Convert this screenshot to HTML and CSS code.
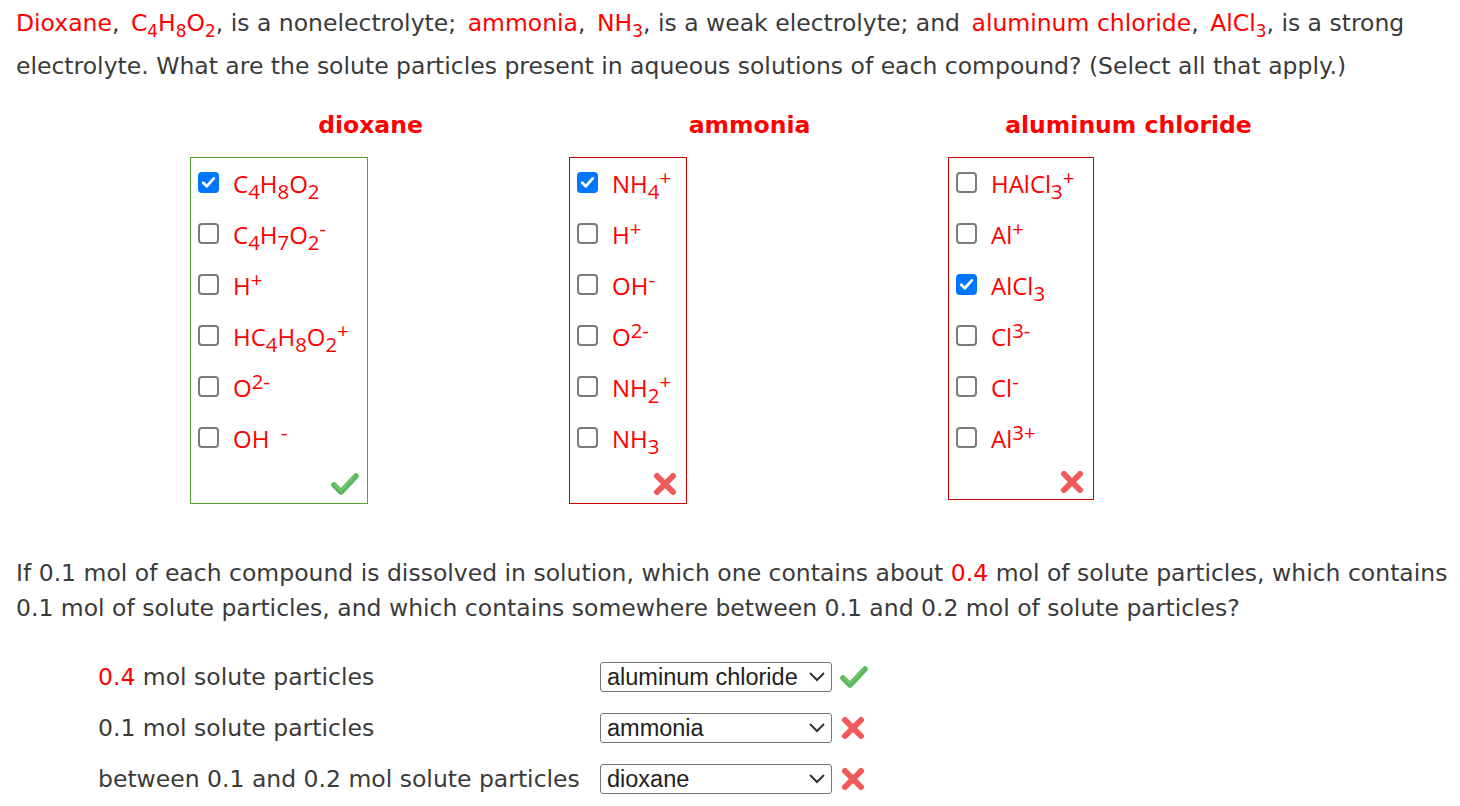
FILE: index.html
```html
<!DOCTYPE html>
<html>
<head>
<meta charset="utf-8">
<link rel="stylesheet" href="styles.css">
</head>
<body>
<p class="intro"><span class="red">Dioxane</span>, <span class="red chem">C<sub>4</sub>H<sub>8</sub>O<sub>2</sub></span>, is a nonelectrolyte; <span class="red chem">ammonia</span>, <span class="red chem">NH<sub>3</sub></span>, is a weak electrolyte; and <span class="red chem">aluminum chloride</span>, <span class="red chem">AlCl<sub>3</sub></span>, is a strong electrolyte. What are the solute particles present in aqueous solutions of each compound? (Select all that apply.)</p>

<div class="columns">
  <div class="col">
    <h3 class="col-title">dioxane</h3>
    <div class="box box-ok box-dioxane">
      <label class="opt"><input type="checkbox" checked><span class="lbl">C<sub>4</sub>H<sub>8</sub>O<sub>2</sub></span></label>
      <label class="opt"><input type="checkbox"><span class="lbl">C<sub>4</sub>H<sub>7</sub>O<sub>2</sub><sup>-</sup></span></label>
      <label class="opt"><input type="checkbox"><span class="lbl">H<sup>+</sup></span></label>
      <label class="opt"><input type="checkbox"><span class="lbl">HC<sub>4</sub>H<sub>8</sub>O<sub>2</sub><sup>+</sup></span></label>
      <label class="opt"><input type="checkbox"><span class="lbl">O<sup>2-</sup></span></label>
      <label class="opt"><input type="checkbox"><span class="lbl">OH <sup>&nbsp;-</sup></span></label>
      <div class="mark-row">
        <svg class="icon-ok" width="28" height="24" viewBox="0 0 28 24"><path d="M3 13 L10 20 L25 4" fill="none" stroke="#5cb85c" stroke-width="5.5" stroke-linecap="round" stroke-linejoin="round"/><path d="M4 12.5 L10 18.5 L24 3.5" fill="none" stroke="#7fd07a" stroke-width="1.5" stroke-linecap="round" stroke-linejoin="round" opacity="0.7"/></svg>
      </div>
    </div>
  </div>
  <div class="col">
    <h3 class="col-title">ammonia</h3>
    <div class="box box-bad box-ammonia">
      <label class="opt"><input type="checkbox" checked><span class="lbl">NH<sub>4</sub><sup>+</sup></span></label>
      <label class="opt"><input type="checkbox"><span class="lbl">H<sup>+</sup></span></label>
      <label class="opt"><input type="checkbox"><span class="lbl">OH<sup>-</sup></span></label>
      <label class="opt"><input type="checkbox"><span class="lbl">O<sup>2-</sup></span></label>
      <label class="opt"><input type="checkbox"><span class="lbl">NH<sub>2</sub><sup>+</sup></span></label>
      <label class="opt"><input type="checkbox"><span class="lbl">NH<sub>3</sub></span></label>
      <div class="mark-row">
        <svg class="icon-bad" width="26" height="26" viewBox="0 0 26 26"><path d="M5 5 L21 21 M21 5 L5 21" stroke="#f05a5a" stroke-width="6" stroke-linecap="round"/></svg>
      </div>
    </div>
  </div>
  <div class="col">
    <h3 class="col-title">aluminum chloride</h3>
    <div class="box box-bad box-alcl">
      <label class="opt"><input type="checkbox"><span class="lbl">HAlCl<sub>3</sub><sup>+</sup></span></label>
      <label class="opt"><input type="checkbox"><span class="lbl">Al<sup>+</sup></span></label>
      <label class="opt"><input type="checkbox" checked><span class="lbl">AlCl<sub>3</sub></span></label>
      <label class="opt"><input type="checkbox"><span class="lbl">Cl<sup>3-</sup></span></label>
      <label class="opt"><input type="checkbox"><span class="lbl">Cl<sup>-</sup></span></label>
      <label class="opt"><input type="checkbox"><span class="lbl">Al<sup>3+</sup></span></label>
      <div class="mark-row mark-row-short">
        <svg class="icon-bad" width="26" height="26" viewBox="0 0 26 26"><path d="M5 5 L21 21 M21 5 L5 21" stroke="#f05a5a" stroke-width="6" stroke-linecap="round"/></svg>
      </div>
    </div>
  </div>
</div>

<p class="question">If 0.1 mol of each compound is dissolved in solution, which one contains about <span class="red">0.4</span> mol of solute particles, which contains 0.1 mol of solute particles, and which contains somewhere between 0.1 and 0.2 mol of solute particles?</p>

<div class="answers">
  <div class="ans-row">
    <span class="ans-label"><span class="red">0.4</span> mol solute particles</span>
    <select class="ans-select"><option selected>aluminum chloride</option><option>ammonia</option><option>dioxane</option></select>
    <svg class="icon-ok" width="28" height="24" viewBox="0 0 28 24"><path d="M3 13 L10 20 L25 4" fill="none" stroke="#5cb85c" stroke-width="5.5" stroke-linecap="round" stroke-linejoin="round"/><path d="M4 12.5 L10 18.5 L24 3.5" fill="none" stroke="#7fd07a" stroke-width="1.5" stroke-linecap="round" stroke-linejoin="round" opacity="0.7"/></svg>
  </div>
  <div class="ans-row">
    <span class="ans-label">0.1 mol solute particles</span>
    <select class="ans-select"><option>aluminum chloride</option><option selected>ammonia</option><option>dioxane</option></select>
    <svg class="icon-bad" width="26" height="26" viewBox="0 0 26 26"><path d="M5 5 L21 21 M21 5 L5 21" stroke="#f05a5a" stroke-width="6" stroke-linecap="round"/></svg>
  </div>
  <div class="ans-row">
    <span class="ans-label">between 0.1 and 0.2 mol solute particles</span>
    <select class="ans-select"><option>aluminum chloride</option><option>ammonia</option><option selected>dioxane</option></select>
    <svg class="icon-bad" width="26" height="26" viewBox="0 0 26 26"><path d="M5 5 L21 21 M21 5 L5 21" stroke="#f05a5a" stroke-width="6" stroke-linecap="round"/></svg>
  </div>
</div>
</body>
</html>
```
FILE: styles.css
```css
html, body {
  margin: 0;
  padding: 0;
  background: #ffffff;
}
body {
  padding: 0 6px 0 16px;
  font-family: "DejaVu Sans", Verdana, sans-serif;
  font-size: 23.5px;
  color: #3a3a3a;
}
.red { color: #ff0000; }
sub, sup { font-size: 0.72em; line-height: 0; }
.intro {
  margin: 2px 0 0 0;
  line-height: 43px;
}
.intro .chem { margin-left: 4px; }
.columns {
  display: grid;
  grid-template-columns: 379px 379px 379px;
  margin: 22px 0 0 165px;
}
.col-title {
  margin: 0;
  text-align: center;
  color: #ff0000;
  font-size: 23.5px;
  font-weight: bold;
  line-height: 30px;
}
.box {
  margin: 17px 0 0 9px;
  border: 1px solid #cc0000;
  padding: 0 0 0 7px;
  display: flex;
  flex-direction: column;
}
.box-ok { border-color: #5a9e2f; width: 169px; }
.box-ammonia { width: 109px; }
.box-alcl { width: 137px; }
.opt {
  height: 51px;
  display: flex;
  align-items: center;
  gap: 14px;
  font-family: "Open Sans", "Noto Sans", sans-serif;
  font-size: 24px;
  color: #ff0000;
}
.opt input {
  -webkit-appearance: none;
  appearance: none;
  width: 21px;
  height: 21px;
  margin: -2px 0 0 0;
  flex: none;
  border: 2px solid #7a7a7a;
  border-radius: 4px;
  background: #ffffff;
  box-sizing: border-box;
}
.opt input:checked {
  border-color: #0075ff;
  background: #0075ff url("data:image/svg+xml,%3Csvg xmlns='http://www.w3.org/2000/svg' width='17' height='17' viewBox='0 0 17 17'%3E%3Cpath d='M3.2 8.8 L6.8 12.2 L13.8 4.4' fill='none' stroke='white' stroke-width='2.8' stroke-linecap='round' stroke-linejoin='round'/%3E%3C/svg%3E") center / 17px 17px no-repeat;
}
.lbl sub { font-size: 0.85em; vertical-align: -0.3em; }
.lbl sup { font-size: 0.85em; vertical-align: 0.38em; }
.mark-row {
  height: 39px;
  display: flex;
  justify-content: flex-end;
  align-items: center;
  padding-right: 8px;
}
.mark-row-short { height: 35px; }
.question {
  margin: 52px 0 0 0;
  line-height: 35px;
}
.answers {
  margin: 25px 0 0 82px;
}
.ans-row {
  height: 51px;
  display: flex;
  align-items: center;
  font-size: 23.5px;
}
.ans-label {
  width: 502px;
  flex: none;
}
.ans-select {
  -webkit-appearance: none;
  appearance: none;
  width: 232px;
  height: 30px;
  box-sizing: border-box;
  padding: 0 30px 0 6px;
  border: 1px solid #767676;
  border-radius: 3px;
  background: #ffffff url("data:image/svg+xml,%3Csvg xmlns='http://www.w3.org/2000/svg' width='18' height='11' viewBox='0 0 18 11'%3E%3Cpath d='M2 2 L9 9 L16 2' fill='none' stroke='%23333' stroke-width='2'/%3E%3C/svg%3E") right 5px center / 18px 11px no-repeat;
  font-family: "Liberation Sans", Arial, sans-serif;
  font-size: 23.5px;
  line-height: 28px;
  color: #222222;
  margin: 0 8px 0 0;
}
.icon-ok, .icon-bad { flex: none; }
```
